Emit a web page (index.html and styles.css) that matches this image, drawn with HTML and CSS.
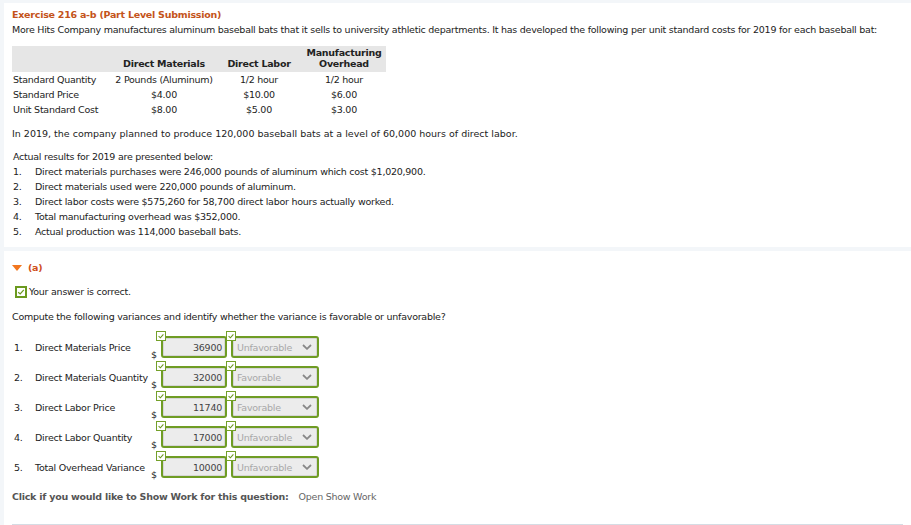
FILE: index.html
```html
<!DOCTYPE html>
<html lang="en">
<head>
  <meta charset="UTF-8">
  <title>Exercise 216 a-b</title>
  <link rel="stylesheet" href="styles.css">
</head>
<body>
  <div class="panel question">
    <h1 class="title">Exercise 216 a-b (Part Level Submission)</h1>
    <p class="line">More Hits Company manufactures aluminum baseball bats that it sells to university athletic departments. It has developed the following per unit standard costs for 2019 for each baseball bat:</p>

    <table class="costs">
      <thead>
        <tr>
          <th class="c-label"></th>
          <th class="c-dm">Direct Materials</th>
          <th class="c-dl">Direct Labor</th>
          <th class="c-oh">Manufacturing<br>Overhead</th>
        </tr>
      </thead>
      <tbody>
        <tr>
          <td>Standard Quantity</td>
          <td>2 Pounds (Aluminum)</td>
          <td>1/2 hour</td>
          <td>1/2 hour</td>
        </tr>
        <tr>
          <td>Standard Price</td>
          <td>$4.00</td>
          <td>$10.00</td>
          <td>$6.00</td>
        </tr>
        <tr>
          <td>Unit Standard Cost</td>
          <td>$8.00</td>
          <td>$5.00</td>
          <td>$3.00</td>
        </tr>
      </tbody>
    </table>

    <p class="line plan">In 2019, the company planned to produce 120,000 baseball bats at a level of 60,000 hours of direct labor.</p>

    <p class="line actual">Actual results for 2019 are presented below:</p>
    <ol class="facts">
      <li><span class="num">1.</span><span>Direct materials purchases were 246,000 pounds of aluminum which cost $1,020,900.</span></li>
      <li><span class="num">2.</span><span>Direct materials used were 220,000 pounds of aluminum.</span></li>
      <li><span class="num">3.</span><span>Direct labor costs were $575,260 for 58,700 direct labor hours actually worked.</span></li>
      <li><span class="num">4.</span><span>Total manufacturing overhead was $352,000.</span></li>
      <li><span class="num">5.</span><span>Actual production was 114,000 baseball bats.</span></li>
    </ol>
  </div>

  <div class="panel part">
    <div class="part-head">
      <span class="caret"></span>
      <span class="part-name">(a)</span>
    </div>

    <div class="status">
      <span class="status-box">
        <svg width="8" height="8" viewBox="0 0 8 8"><polyline points="1.2,4.2 3.2,6 6.8,1.8" fill="none" stroke="#6b9a1f" stroke-width="1.2"/></svg>
      </span>
      <span>Your answer is correct.</span>
    </div>

    <p class="line prompt">Compute the following variances and identify whether the variance is favorable or unfavorable?</p>

    <div class="answers">
      <div class="answer">
        <span class="num">1.</span>
        <span class="label">Direct Materials Price</span>
        <span class="dollar">$</span>
        <span class="field amount"><span class="tick"><svg width="8" height="8" viewBox="0 0 8 8"><polyline points="1.6,4.2 3.4,5.8 6.4,2.4" fill="none" stroke="#6b9a1f" stroke-width="1.1"/></svg></span>36900</span>
        <span class="field choice"><span class="tick"><svg width="8" height="8" viewBox="0 0 8 8"><polyline points="1.6,4.2 3.4,5.8 6.4,2.4" fill="none" stroke="#6b9a1f" stroke-width="1.1"/></svg></span>Unfavorable<svg class="chev" width="10" height="6" viewBox="0 0 10 6"><polyline points="1,1 5,4.8 9,1" fill="none" stroke="#888" stroke-width="1.8"/></svg></span>
      </div>
      <div class="answer">
        <span class="num">2.</span>
        <span class="label">Direct Materials Quantity</span>
        <span class="dollar">$</span>
        <span class="field amount"><span class="tick"><svg width="8" height="8" viewBox="0 0 8 8"><polyline points="1.6,4.2 3.4,5.8 6.4,2.4" fill="none" stroke="#6b9a1f" stroke-width="1.1"/></svg></span>32000</span>
        <span class="field choice"><span class="tick"><svg width="8" height="8" viewBox="0 0 8 8"><polyline points="1.6,4.2 3.4,5.8 6.4,2.4" fill="none" stroke="#6b9a1f" stroke-width="1.1"/></svg></span>Favorable<svg class="chev" width="10" height="6" viewBox="0 0 10 6"><polyline points="1,1 5,4.8 9,1" fill="none" stroke="#888" stroke-width="1.8"/></svg></span>
      </div>
      <div class="answer">
        <span class="num">3.</span>
        <span class="label">Direct Labor Price</span>
        <span class="dollar">$</span>
        <span class="field amount"><span class="tick"><svg width="8" height="8" viewBox="0 0 8 8"><polyline points="1.6,4.2 3.4,5.8 6.4,2.4" fill="none" stroke="#6b9a1f" stroke-width="1.1"/></svg></span>11740</span>
        <span class="field choice"><span class="tick"><svg width="8" height="8" viewBox="0 0 8 8"><polyline points="1.6,4.2 3.4,5.8 6.4,2.4" fill="none" stroke="#6b9a1f" stroke-width="1.1"/></svg></span>Favorable<svg class="chev" width="10" height="6" viewBox="0 0 10 6"><polyline points="1,1 5,4.8 9,1" fill="none" stroke="#888" stroke-width="1.8"/></svg></span>
      </div>
      <div class="answer">
        <span class="num">4.</span>
        <span class="label">Direct Labor Quantity</span>
        <span class="dollar">$</span>
        <span class="field amount"><span class="tick"><svg width="8" height="8" viewBox="0 0 8 8"><polyline points="1.6,4.2 3.4,5.8 6.4,2.4" fill="none" stroke="#6b9a1f" stroke-width="1.1"/></svg></span>17000</span>
        <span class="field choice"><span class="tick"><svg width="8" height="8" viewBox="0 0 8 8"><polyline points="1.6,4.2 3.4,5.8 6.4,2.4" fill="none" stroke="#6b9a1f" stroke-width="1.1"/></svg></span>Unfavorable<svg class="chev" width="10" height="6" viewBox="0 0 10 6"><polyline points="1,1 5,4.8 9,1" fill="none" stroke="#888" stroke-width="1.8"/></svg></span>
      </div>
      <div class="answer">
        <span class="num">5.</span>
        <span class="label">Total Overhead Variance</span>
        <span class="dollar">$</span>
        <span class="field amount"><span class="tick"><svg width="8" height="8" viewBox="0 0 8 8"><polyline points="1.6,4.2 3.4,5.8 6.4,2.4" fill="none" stroke="#6b9a1f" stroke-width="1.1"/></svg></span>10000</span>
        <span class="field choice"><span class="tick"><svg width="8" height="8" viewBox="0 0 8 8"><polyline points="1.6,4.2 3.4,5.8 6.4,2.4" fill="none" stroke="#6b9a1f" stroke-width="1.1"/></svg></span>Unfavorable<svg class="chev" width="10" height="6" viewBox="0 0 10 6"><polyline points="1,1 5,4.8 9,1" fill="none" stroke="#888" stroke-width="1.8"/></svg></span>
      </div>
    </div>

    <p class="line show-work"><b>Click if you would like to Show Work for this question:</b><a href="#" class="open-link">Open Show Work</a></p>

    <div class="work-box"></div>
  </div>
</body>
</html>
```

FILE: styles.css
```css
* {
  box-sizing: border-box;
}

body {
  margin: 0;
  background-color: #f3f6f9;
  color: #222;
  font-family: "DejaVu Sans", Verdana, sans-serif;
  font-size: 9.5px;
  letter-spacing: -0.25px;
}

.panel {
  background-color: white;
  margin: 3px 0 0 4px;
  padding: 4px 8px 8px;
}

.panel + .panel {
  margin-top: 4px;
}

.title {
  margin: 0;
  font-size: 9.5px;
  line-height: 15px;
  color: #c4531a;
}

.line {
  margin: 0;
  line-height: 15px;
}

/* standard cost table */
.costs {
  margin: 9px 0 0;
  border-collapse: collapse;
  line-height: 15px;
}

.costs th {
  background-color: #e6e6e6;
  line-height: 11px;
  padding: 1px 0 3px;
  vertical-align: bottom;
}

.costs td {
  padding: 0;
  text-align: center;
}

.costs td:first-child {
  text-align: left;
  padding-left: 1px;
}

.c-label { width: 100px; }
.c-dm { width: 104px; }
.c-dl { width: 86px; }
.c-oh { width: 84px; }

.plan {
  margin-top: 9px;
  letter-spacing: 0;
}

.actual {
  margin-top: 8px;
  padding-left: 1px;
}

.facts {
  list-style: none;
  margin: 0;
  padding: 0 0 0 1px;
  line-height: 15px;
}

.facts li {
  display: flex;
}

.facts .num {
  width: 22px;
}

/* part (a) */
.part {
  padding-top: 9px;
}

.part-head {
  display: flex;
  align-items: center;
  line-height: 15px;
}

.caret {
  width: 0;
  height: 0;
  border-left: 5px solid transparent;
  border-right: 5px solid transparent;
  border-top: 6px solid #f2761e;
  margin-right: 6px;
}

.part-name {
  color: #d0501c;
  font-weight: bold;
}

.status {
  display: flex;
  align-items: center;
  margin-top: 9px;
  padding-left: 3px;
  line-height: 15px;
}

.status-box {
  display: flex;
  align-items: center;
  justify-content: center;
  width: 12px;
  height: 12px;
  border: 2px solid #6b9a1f;
  background: white;
  margin-right: 2px;
}

.prompt {
  margin-top: 10px;
}

.answers {
  margin-top: 8px;
  padding-left: 2px;
}

.answer {
  display: grid;
  grid-template-columns: 21px 116px 10px 66px 92px;
  align-items: center;
  height: 30px;
}

.dollar {
  align-self: end;
  margin-bottom: 2px;
  line-height: 11px;
}

.field {
  position: relative;
  height: 22px;
  border: 2px solid #6f9c24;
  border-radius: 3px;
  box-shadow: inset 0 0 0 1px #d6d6d6;
  background-color: #ececec;
  display: flex;
  align-items: center;
  line-height: 15px;
}

.amount {
  justify-content: flex-end;
  padding-right: 3px;
  color: #444;
}

.choice {
  margin-left: 4px;
  padding: 0 5px 0 4px;
  color: #a8a8a8;
  justify-content: space-between;
}

.tick {
  position: absolute;
  top: -7px;
  left: -7px;
  width: 10px;
  height: 10px;
  border: 1px solid #74a02a;
  background: white;
  display: flex;
  align-items: center;
  justify-content: center;
}

.show-work {
  margin-top: 7px;
  color: #555;
}

.open-link {
  margin-left: 10px;
  color: #666;
  text-decoration: none;
}

.work-box {
  margin-top: 20px;
  height: 30px;
  border-top: 2px solid #d5dce4;
  background-color: #fafbfc;
}
```
